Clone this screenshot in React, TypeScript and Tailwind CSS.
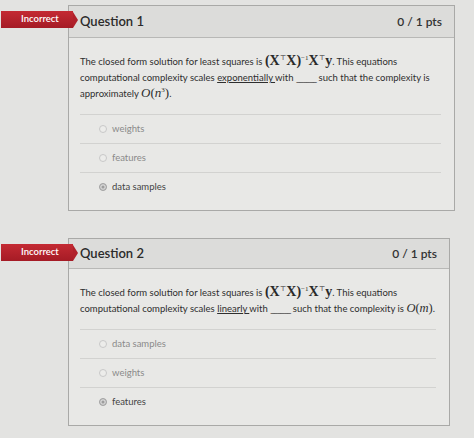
import React from "react";

const serif = { fontFamily: '"Liberation Serif", "DejaVu Serif", serif' };

function Badge() {
  return (
    <div className="absolute -left-[68px] top-[5px] flex h-[17px] items-center">
      <div className="flex h-[17px] w-[72px] items-center bg-gradient-to-b from-[#c42a33] to-[#a51b25] pl-[20px] text-[9.5px] font-semibold text-white">
        Incorrect
      </div>
      <div className="h-0 w-0 border-y-[8.5px] border-l-[5px] border-y-transparent border-l-[#b0212b]" />
    </div>
  );
}

function Sup({ children }: { children: React.ReactNode }) {
  return (
    <span className="relative -top-[5px] text-[7px] font-normal leading-none">
      {children}
    </span>
  );
}

function Formula() {
  return (
    <span style={serif} className="text-[14px] font-bold leading-none text-[#2a2a2a]">
      (X<Sup>⊤</Sup>X)<Sup>−1</Sup>X<Sup>⊤</Sup>y
    </span>
  );
}

function Answer({
  label,
  selected,
}: {
  label: string;
  selected?: boolean;
}) {
  return (
    <div className="flex h-[29px] items-center border-t border-[#d2d2d0] pl-[19px]">
      <span
        className={`mr-[5px] h-[8px] w-[8px] rounded-full border ${
          selected
            ? "border-[#a5a5a5] bg-[#9d9d9d] shadow-[inset_0_0_0_1.5px_#d6d6d6]"
            : "border-[#c8c8c8] bg-[#ececea]"
        }`}
      />
      <span
        className={`text-[9.5px] ${
          selected ? "text-[#444]" : "text-[#8a8a8a]"
        }`}
      >
        {label}
      </span>
    </div>
  );
}

function Question({
  title,
  width,
  header,
  children,
  answers,
}: {
  title: string;
  width: string;
  header: string;
  children: React.ReactNode;
  answers: { label: string; selected?: boolean }[];
}) {
  return (
    <div className={`relative ml-[68px] border border-[#a9a9a7] bg-[#e8e8e6] ${width}`}>
      <Badge />
      <div
        className={`flex items-center justify-between border-b border-[#b8b8b6] bg-[#dcdcda] pl-[11px] pr-[12px] ${header}`}
      >
        <span className="text-[13px] font-semibold text-[#2b2b2b]">{title}</span>
        <span className="text-[12px] font-semibold text-[#333]">0 / 1 pts</span>
      </div>
      <div className="pl-[11px] pr-[10px] pt-[16px]">
        <div className="text-[9.5px] leading-[16px] text-[#2e2e2e]">{children}</div>
        <div className="mt-[12px] mr-[3px]">
          {answers.map((a) => (
            <Answer key={a.label} label={a.label} selected={a.selected} />
          ))}
        </div>
      </div>
      <div className="h-[9px]" />
    </div>
  );
}

export default function App() {
  return (
    <div
      className="h-[438px] w-[474px] overflow-hidden bg-[#e3e3e1] pt-[5px]"
      style={{ fontFamily: 'Lato, "Open Sans", sans-serif' }}
    >
      <Question
        title="Question 1"
        width="w-[387px]"
        header="h-[32px]"
        answers={[
          { label: "weights" },
          { label: "features" },
          { label: "data samples", selected: true },
        ]}
      >
        The closed form solution for least squares is <Formula />. This equations
        computational complexity scales{" "}
        <span className="underline">exponentially </span>with{" "}
        <span className="tracking-[-1px]">______</span> such that the complexity is
        approximately{" "}
        <span style={serif} className="text-[13px] leading-none">
          <i>O</i>(<i>n</i>
          <Sup>3</Sup>)
        </span>
        .
      </Question>
      <div className="h-[27px]" />
      <Question
        title="Question 2"
        width="w-[382px]"
        header="h-[30px]"
        answers={[
          { label: "data samples" },
          { label: "weights" },
          { label: "features", selected: true },
        ]}
      >
        The closed form solution for least squares is <Formula />. This equations
        computational complexity scales <span className="underline">linearly </span>
        with <span className="tracking-[-1px]">______</span> such that the complexity
        is{" "}
        <span style={serif} className="text-[12.5px] leading-none">
          <i>O</i>(<i>m</i>)
        </span>
        .
      </Question>
    </div>
  );
}
